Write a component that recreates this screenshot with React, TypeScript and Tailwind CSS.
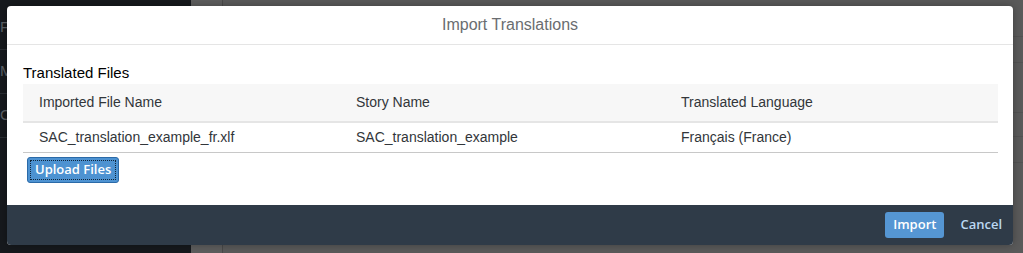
import React from "react";

const FONT = { fontFamily: '"Liberation Sans", Arial, sans-serif' };
const BTN_FONT = { fontFamily: '"Open Sans", "Liberation Sans", sans-serif' };

const columns = ["Imported File Name", "Story Name", "Translated Language"];
const rows = [["SAC_translation_example_fr.xlf", "SAC_translation_example", "Français (France)"]];

function Backdrop() {
  return (
    <div className="flex h-full w-full">
      {/* left nav, dimmed */}
      <div className="flex w-[191px] flex-col bg-[#16191d] pt-[6px]">
        {["F", "M", "C"].map((l) => (
          <div key={l} className="flex h-[44px] items-center border-b border-[#2a2e33] text-[15px] text-[#5c6066]">
            {l}
          </div>
        ))}
      </div>
      {/* workspace, dimmed */}
      <div className="flex flex-1">
        <div className="w-[32px] border-r border-[#4a4a4a] bg-[#5e5e5e]" />
        <div className="flex flex-1 flex-col bg-[#5a5a5a]">
          <div className="h-[37px] border-b border-[#525252]" />
          <div className="h-[26px] border-b border-[#525252]" />
          <div className="h-[50px] border-b border-[#525252]" />
          <div className="h-[24px] border-b border-[#525252]" />
          <div className="h-[26px] border-b border-[#525252]" />
        </div>
      </div>
    </div>
  );
}

export default function App() {
  return (
    <div className="relative h-[253px] w-[1023px] overflow-hidden" style={FONT}>
      <Backdrop />

      {/* Dialog */}
      <div className="absolute left-[7px] top-[6px] flex h-[239px] w-[1006px] flex-col overflow-hidden rounded-[4px] bg-white shadow-[0_0_8px_rgba(0,0,0,0.3)]">
        <div className="flex h-[39px] shrink-0 items-center justify-center border-b border-[#e5e5e5] text-[16px] text-[#6a6d70]">
          Import Translations
        </div>

        <div className="flex flex-1 flex-col px-[16px]">
          <div className="mt-[16px] h-[23px] text-[15px] leading-[23px] text-[#000]">Translated Files</div>

          <table className="w-[975px] border-collapse text-[14px] text-[#32363a]">
            <thead>
              <tr className="h-[38px] border-b-2 border-[#e5e5e5] bg-[#f7f7f7]">
                {columns.map((c, i) => (
                  <th
                    key={c}
                    className={
                      "px-[16px] text-left font-normal " +
                      (i === 0 ? "w-[317px]" : i === 1 ? "w-[325px]" : "")
                    }
                  >
                    {c}
                  </th>
                ))}
              </tr>
            </thead>
            <tbody>
              {rows.map((r) => (
                <tr key={r[0]} className="h-[30px] border-b border-[#c8c8c8]">
                  {r.map((v, i) => (
                    <td key={i} className="px-[16px]">
                      {v}
                    </td>
                  ))}
                </tr>
              ))}
            </tbody>
          </table>

          <div className="mt-[4px] flex">
            <button
              style={BTN_FONT}
              className="ml-[4px] flex h-[26px] items-center rounded-[3px] border border-[#2b6aa8] bg-[#4d92d1] p-[2px] text-[13px] font-semibold text-white"
            >
              <span className="flex h-full items-center border border-dotted border-[#10253a] px-[4px]">
                Upload Files
              </span>
            </button>
          </div>
        </div>

        <div className="flex h-[40px] shrink-0 items-center justify-end gap-[16px] bg-[#2f3b48] pr-[11px]" style={BTN_FONT}>
          <button className="h-[26px] rounded-[3px] bg-[#5596d3] px-[8px] text-[13px] font-semibold text-white">
            Import
          </button>
          <button className="text-[13px] font-semibold text-[#bcd8f2]">Cancel</button>
        </div>
      </div>
    </div>
  );
}
